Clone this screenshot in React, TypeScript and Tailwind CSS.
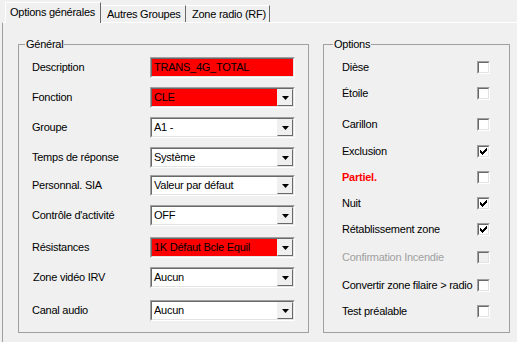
import type { ReactNode } from 'react'

const CHECK = [
  [6, 0], [5, 1], [6, 1], [0, 2], [4, 2], [5, 2], [6, 2], [0, 3], [1, 3], [3, 3], [4, 3], [5, 3],
  [0, 4], [1, 4], [2, 4], [3, 4], [4, 4], [1, 5], [2, 5], [3, 5], [2, 6],
]

function Arrow() {
  return (
    <svg width="7" height="4" viewBox="0 0 7 4">
      <polygon points="0,0 7,0 3.5,4" fill="#000" />
    </svg>
  )
}

function Combo({ value, red, plain }: { value: string; red?: boolean; plain?: boolean }) {
  return (
    <div className="flex h-[21px] w-[145px] border border-t-[#a0a0a0] border-l-[#a0a0a0] border-b-white border-r-white">
      <div
        className={`flex flex-1 border border-t-[#696969] border-l-[#696969] border-b-[#e3e3e3] border-r-[#e3e3e3] ${red ? 'bg-[#ff0000]' : 'bg-white'}`}
      >
        <span className="flex-1 overflow-hidden whitespace-nowrap pl-[2px] leading-[17px]">{value}</span>
        {!plain && (
          <div className="flex w-[16px] items-center justify-center border border-t-[#f0f0f0] border-l-[#f0f0f0] border-b-[#696969] border-r-[#696969] bg-[#f0f0f0]">
            <Arrow />
          </div>
        )}
      </div>
    </div>
  )
}

function CheckBox({ checked, disabled }: { checked?: boolean; disabled?: boolean }) {
  return (
    <div className="ml-auto mr-[19px] h-[13px] w-[13px] shrink-0 border border-t-[#a0a0a0] border-l-[#a0a0a0] border-b-white border-r-white">
      <div
        className={`flex h-full w-full items-center justify-center border border-t-[#696969] border-l-[#696969] border-b-[#e3e3e3] border-r-[#e3e3e3] ${disabled ? 'bg-[#f0f0f0]' : 'bg-white'}`}
      >
        {checked && (
          <svg width="7" height="7" viewBox="0 0 7 7" shapeRendering="crispEdges">
            {CHECK.map(([x, y]) => (
              <rect key={`${x}-${y}`} x={x} y={y} width="1" height="1" fill="#000" />
            ))}
          </svg>
        )}
      </div>
    </div>
  )
}

const fields: { label: ReactNode; value: string; red?: boolean; plain?: boolean; mt: string }[] = [
  { label: 'Description', value: 'TRANS_4G_TOTAL', red: true, plain: true, mt: 'mt-[6px]' },
  { label: 'Fonction', value: 'CLE', red: true, mt: 'mt-[9px]' },
  { label: 'Groupe', value: 'A1 -', mt: 'mt-[9px]' },
  { label: 'Temps de réponse', value: 'Système', mt: 'mt-[9px]' },
  { label: 'Personnal. SIA', value: 'Valeur par défaut', mt: 'mt-[7px]' },
  { label: "Contrôle d'activité", value: 'OFF', mt: 'mt-[9px]' },
  { label: 'Résistances', value: '1K Défaut Bcle Equil', red: true, mt: 'mt-[11px]' },
  { label: <span className="pl-[1px]">Zone vidéo IRV</span>, value: 'Aucun', mt: 'mt-[9px]' },
  { label: 'Canal audio', value: 'Aucun', mt: 'mt-[12px]' },
]

const options: { label: ReactNode; checked?: boolean; disabled?: boolean; mt: string }[] = [
  { label: 'Dièse', mt: 'mt-[10px]' },
  { label: 'Étoile', mt: 'mt-[13px]' },
  { label: 'Carillon', mt: 'mt-[18px]' },
  { label: 'Exclusion', checked: true, mt: 'mt-[14px]' },
  { label: <span className="font-bold text-[#ff0000]">Partiel.</span>, mt: 'mt-[13px]' },
  { label: 'Nuit', checked: true, mt: 'mt-[13px]' },
  { label: 'Rétablissement zone', checked: true, mt: 'mt-[13px]' },
  { label: <span className="text-[#a0a0a0]">Confirmation Incendie</span>, disabled: true, mt: 'mt-[15px]' },
  { label: 'Convertir zone filaire > radio', mt: 'mt-[15px]' },
  { label: 'Test préalable', mt: 'mt-[13px]' },
]

export default function App() {
  return (
    <div className="h-[342px] w-[517px] overflow-hidden bg-[#f0f0f0] font-['Liberation_Sans',Arial,sans-serif] text-[11px] tracking-[-0.25px] text-black">
      {/* tabs */}
      <div className="flex h-[22px] items-end whitespace-nowrap pl-[5px]">
        <div className="relative z-10 -mb-[1px] h-[21px] w-[96px] border-t border-l border-r border-t-white border-l-white border-r-[#696969] bg-[#f0f0f0] pl-[4px] pt-[2px] leading-[14px]">
          Options générales
        </div>
        <div className="h-[17px] w-[85px] border-t border-r border-t-white border-r-[#696969] pl-[6px] pt-[1px] leading-[14px]">
          Autres Groupes
        </div>
        <div className="h-[17px] w-[84px] border-t border-r border-t-white border-r-[#696969] pl-[6px] pt-[1px] leading-[14px]">
          Zone radio (RF)
        </div>
      </div>

      {/* panel */}
      <div className="ml-[2px] flex h-[320px] border-t border-l border-t-white border-l-[#a0a0a0] pl-[15px] pt-[15px]">
        <fieldset className="h-[295px] w-[291px] border border-[#a0a0a0]">
          <legend className="ml-[6px] px-[1px] leading-[13px]">Général</legend>
          <div className="flex flex-col pl-[13px]">
            {fields.map((f, i) => (
              <div key={i} className={`flex h-[21px] items-center ${f.mt}`}>
                <span className="w-[118px] whitespace-nowrap">{f.label}</span>
                <Combo value={f.value} red={f.red} plain={f.plain} />
              </div>
            ))}
          </div>
        </fieldset>

        <fieldset className="ml-[14px] h-[295px] w-[187px] border border-[#a0a0a0]">
          <legend className="ml-[9px] px-[1px] leading-[13px]">Options</legend>
          <div className="flex flex-col pl-[18px]">
            {options.map((o, i) => (
              <div key={i} className={`flex h-[13px] items-center ${o.mt}`}>
                <span className="whitespace-nowrap">{o.label}</span>
                <CheckBox checked={o.checked} disabled={o.disabled} />
              </div>
            ))}
          </div>
        </fieldset>
      </div>
    </div>
  )
}
